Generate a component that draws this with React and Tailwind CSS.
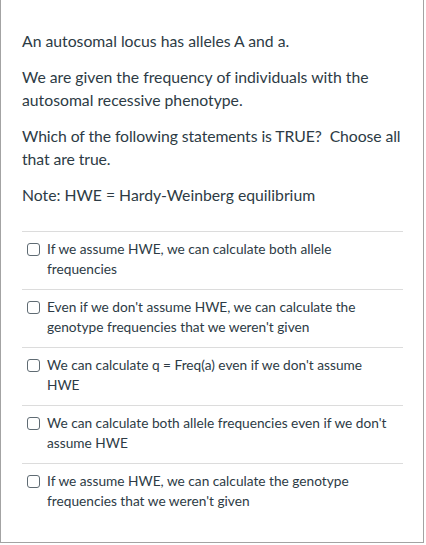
export default function App() {
  const options = [
    "If we assume HWE, we can calculate both allele frequencies",
    "Even if we don't assume HWE, we can calculate the genotype frequencies that we weren't given",
    "We can calculate q = Freq(a) even if we don't assume HWE",
    "We can calculate both allele frequencies even if we don't assume HWE",
    "If we assume HWE, we can calculate the genotype frequencies that we weren't given",
  ];
  return (
    <div
      className="w-[424px] h-[543px] border-l border-r border-b border-[#a3a3a3] bg-white text-[#2d3b45]"
      style={{ fontFamily: "Lato, 'Noto Sans', sans-serif" }}
    >
      <div className="pl-[21px] pr-[19px] pt-[29px]">
        <div className="text-[15.75px] leading-[23px]">
          <p className="mb-[13px]">An autosomal locus has alleles A and a.</p>
          <p className="mb-[13px]">
            We are given the frequency of individuals with the autosomal recessive phenotype.
          </p>
          <p className="mb-[13px] whitespace-nowrap tracking-[-0.08px]">
            Which of the following statements is TRUE?&nbsp; Choose all
            <br />
            that are true.
          </p>
          <p>Note: HWE = Hardy-Weinberg equilibrium</p>
        </div>
        <div className="mt-[25px] mr-[1px]">
          {options.map((o, i) => (
            <div key={i} className="border-t border-[#dcdcdc] pt-[7px] pb-[10px] flex">
              <div className="w-[25px] shrink-0 pl-[5px] pt-[4px]">
                <div className="w-[13px] h-[13px] rounded-[3px] border border-[#5f6b73] bg-white"></div>
              </div>
              <div className="text-[13.7px] leading-[20px] pr-[8px]">{o}</div>
            </div>
          ))}
        </div>
      </div>
    </div>
  );
}
